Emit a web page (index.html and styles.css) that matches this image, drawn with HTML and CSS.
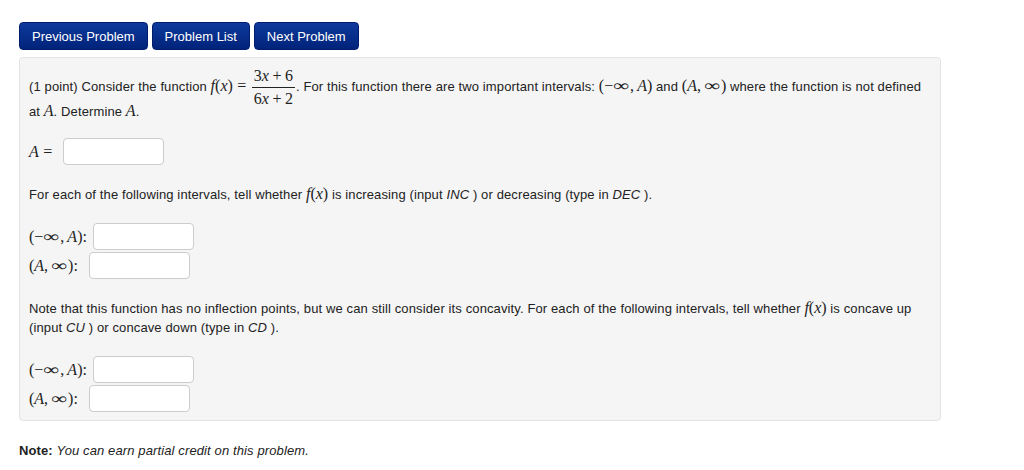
FILE: index.html
```html
<!DOCTYPE html>
<html lang="en">
<head>
    <meta charset="UTF-8">
    <title>Problem 1</title>
    <link rel="stylesheet" href="styles.css">
</head>
<body>
    <!-- navigation -->
    <div class="nav">
        <a class="nav-btn" href="#">Previous Problem</a>
        <a class="nav-btn" href="#">Problem List</a>
        <a class="nav-btn" href="#">Next Problem</a>
    </div>

    <!-- problem body -->
    <div class="problem">
        <p class="intro">(1 point) Consider the function <span class="math"><i>f</i>(<i>x</i>)<span class="rel">=</span></span><span class="frac"><span class="num">3<i>x</i><span class="bin">+</span>6</span><span class="den">6<i>x</i><span class="bin">+</span>2</span></span>. For this function there are two important intervals: <span class="math">(−<span class="inf">∞</span>,&thinsp;<i>A</i>)</span> and <span class="math">(<i>A</i>,&thinsp;<span class="inf">∞</span>)</span> where the function is not defined at <span class="math"><i>A</i></span>. Determine <span class="math"><i>A</i></span>.</p>

        <div class="answer-row">
            <span class="math label"><i>A</i><span class="rel">=</span></span>
            <input class="answer" type="text">
        </div>

        <p>For each of the following intervals, tell whether <span class="math"><i>f</i>(<i>x</i>)</span> is increasing (input <i>INC</i> ) or decreasing (type in <i>DEC</i> ).</p>

        <div class="answer-group">
            <div class="answer-row">
                <span class="math label">(−<span class="inf">∞</span>,&thinsp;<i>A</i>):</span>
                <input class="answer" type="text">
            </div>
            <div class="answer-row">
                <span class="math label wide">(<i>A</i>,&thinsp;<span class="inf">∞</span>):</span>
                <input class="answer" type="text">
            </div>
        </div>

        <p>Note that this function has no inflection points, but we can still consider its concavity. For each of the following intervals, tell whether <span class="math"><i>f</i>(<i>x</i>)</span> is concave up (input <i>CU</i> ) or concave down (type in <i>CD</i> ).</p>

        <div class="answer-group">
            <div class="answer-row">
                <span class="math label">(−<span class="inf">∞</span>,&thinsp;<i>A</i>):</span>
                <input class="answer" type="text">
            </div>
            <div class="answer-row">
                <span class="math label wide">(<i>A</i>,&thinsp;<span class="inf">∞</span>):</span>
                <input class="answer" type="text">
            </div>
        </div>
    </div>

    <p class="credit"><b>Note:</b> <i>You can earn partial credit on this problem.</i></p>
</body>
</html>
```

FILE: styles.css
```css
* {
    box-sizing: border-box;
}
body {
    margin: 0;
    padding: 22px 19px 0;
    font-family: "Liberation Sans", Arial, sans-serif;
    font-size: 13px;
    line-height: 19px;
    letter-spacing: 0.12px;
    color: #222;
    background: #fff;
}
.nav {
    display: flex;
    gap: 4px;
    letter-spacing: 0;
}
.nav-btn {
    display: flex;
    align-items: center;
    height: 28px;
    padding: 0 12px;
    color: #fff;
    text-decoration: none;
    background: linear-gradient(#0e3a9c, #00237a);
    border: 1px solid #001d6c;
    border-radius: 4px;
}
.problem {
    width: 922px;
    margin-top: 7px;
    padding: 0 9px 8px 9px;
    background: #f5f5f5;
    border: 1px solid #e3e3e3;
    border-radius: 4px;
}
.problem p {
    margin: 19px 0;
}
.problem p.intro {
    margin-top: 16px;
    margin-bottom: 17px;
}
.math {
    font-family: "Liberation Serif", "Times New Roman", serif;
    font-size: 16px;
    letter-spacing: 0;
}
.inf {
    display: inline-block;
    width: 1.05em;
    text-align: center;
    transform: scaleX(1.4);
}
.rel {
    margin: 0 0.28em;
}
.bin {
    margin: 0 0.22em;
}
.frac {
    display: inline-flex;
    flex-direction: column;
    align-items: center;
    vertical-align: middle;
    margin: -6px 1px;
    font-family: "Liberation Serif", "Times New Roman", serif;
    font-size: 16px;
    line-height: 16px;
    letter-spacing: 0;
}
.frac .num {
    padding: 0 2px 3px;
    border-bottom: 1px solid #222;
}
.frac .den {
    padding: 3px 2px 0;
}
.answer-row {
    display: flex;
    align-items: center;
    gap: 6px;
}
.answer-row .wide {
    margin-right: 5px;
}
.answer-group {
    display: flex;
    flex-direction: column;
    gap: 2px;
}
.answer-row:only-child {
    gap: 5px;
}
.answer {
    width: 101px;
    height: 27px;
    background: #fff;
    border: 1px solid #ccc;
    border-radius: 4px;
}
.credit {
    margin: 20px 0 0;
}
```
